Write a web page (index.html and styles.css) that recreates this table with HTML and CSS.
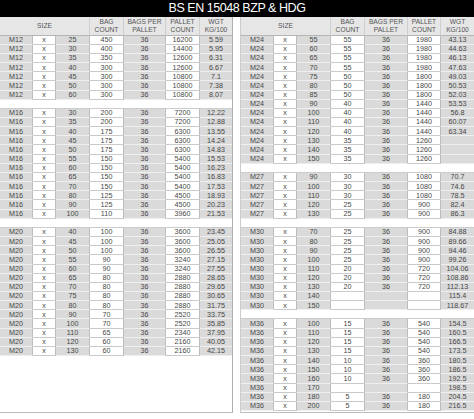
FILE: index.html
```html
<!DOCTYPE html>
<html lang="en">
<head>
<meta charset="utf-8">
<title>BS EN 15048 BZP &amp; HDG</title>
<link rel="stylesheet" href="styles.css">
</head>
<body>
<div class="title">BS EN 15048 BZP &amp; HDG</div>
<div class="main">
  <div class="panel left">
    <div class="head">
      <span class="size">SIZE</span><span>BAG<br>COUNT</span><span>BAGS PER<br>PALLET</span><span>PALLET<br>COUNT</span><span>WGT<br>KG/100</span>
    </div>
    <div class="row"><span>M12</span><span>x</span><span>25</span><span>450</span><span>36</span><span>16200</span><span>5.59</span></div>
    <div class="row"><span>M12</span><span>x</span><span>30</span><span>400</span><span>36</span><span>14400</span><span>5.95</span></div>
    <div class="row"><span>M12</span><span>x</span><span>35</span><span>350</span><span>36</span><span>12600</span><span>6.31</span></div>
    <div class="row"><span>M12</span><span>x</span><span>40</span><span>300</span><span>36</span><span>12600</span><span>6.67</span></div>
    <div class="row"><span>M12</span><span>x</span><span>45</span><span>300</span><span>36</span><span>10800</span><span>7.1</span></div>
    <div class="row"><span>M12</span><span>x</span><span>50</span><span>300</span><span>36</span><span>10800</span><span>7.38</span></div>
    <div class="row"><span>M12</span><span>x</span><span>60</span><span>300</span><span>36</span><span>10800</span><span>8.07</span></div>
    <div class="row blank"></div>
    <div class="row"><span>M16</span><span>x</span><span>30</span><span>200</span><span>36</span><span>7200</span><span>12.22</span></div>
    <div class="row"><span>M16</span><span>x</span><span>35</span><span>200</span><span>36</span><span>7200</span><span>12.88</span></div>
    <div class="row"><span>M16</span><span>x</span><span>40</span><span>175</span><span>36</span><span>6300</span><span>13.55</span></div>
    <div class="row"><span>M16</span><span>x</span><span>45</span><span>175</span><span>36</span><span>6300</span><span>14.24</span></div>
    <div class="row"><span>M16</span><span>x</span><span>50</span><span>175</span><span>36</span><span>6300</span><span>14.83</span></div>
    <div class="row"><span>M16</span><span>x</span><span>55</span><span>150</span><span>36</span><span>5400</span><span>15.53</span></div>
    <div class="row"><span>M16</span><span>x</span><span>60</span><span>150</span><span>36</span><span>5400</span><span>16.23</span></div>
    <div class="row"><span>M16</span><span>x</span><span>65</span><span>150</span><span>36</span><span>5400</span><span>16.83</span></div>
    <div class="row"><span>M16</span><span>x</span><span>70</span><span>150</span><span>36</span><span>5400</span><span>17.53</span></div>
    <div class="row"><span>M16</span><span>x</span><span>80</span><span>125</span><span>36</span><span>4500</span><span>18.93</span></div>
    <div class="row"><span>M16</span><span>x</span><span>90</span><span>125</span><span>36</span><span>4500</span><span>20.23</span></div>
    <div class="row"><span>M16</span><span>x</span><span>100</span><span>110</span><span>36</span><span>3960</span><span>21.53</span></div>
    <div class="row blank"></div>
    <div class="row"><span>M20</span><span>x</span><span>40</span><span>100</span><span>36</span><span>3600</span><span>23.45</span></div>
    <div class="row"><span>M20</span><span>x</span><span>45</span><span>100</span><span>36</span><span>3600</span><span>25.05</span></div>
    <div class="row"><span>M20</span><span>x</span><span>50</span><span>100</span><span>36</span><span>3600</span><span>26.55</span></div>
    <div class="row"><span>M20</span><span>x</span><span>55</span><span>90</span><span>36</span><span>3240</span><span>27.15</span></div>
    <div class="row"><span>M20</span><span>x</span><span>60</span><span>90</span><span>36</span><span>3240</span><span>27.55</span></div>
    <div class="row"><span>M20</span><span>x</span><span>65</span><span>80</span><span>36</span><span>2880</span><span>28.65</span></div>
    <div class="row"><span>M20</span><span>x</span><span>70</span><span>80</span><span>36</span><span>2880</span><span>29.65</span></div>
    <div class="row"><span>M20</span><span>x</span><span>75</span><span>80</span><span>36</span><span>2880</span><span>30.65</span></div>
    <div class="row"><span>M20</span><span>x</span><span>80</span><span>80</span><span>36</span><span>2880</span><span>31.75</span></div>
    <div class="row"><span>M20</span><span>x</span><span>90</span><span>70</span><span>36</span><span>2520</span><span>33.75</span></div>
    <div class="row"><span>M20</span><span>x</span><span>100</span><span>70</span><span>36</span><span>2520</span><span>35.85</span></div>
    <div class="row"><span>M20</span><span>x</span><span>110</span><span>65</span><span>36</span><span>2340</span><span>37.95</span></div>
    <div class="row"><span>M20</span><span>x</span><span>120</span><span>60</span><span>36</span><span>2160</span><span>40.05</span></div>
    <div class="row"><span>M20</span><span>x</span><span>130</span><span>60</span><span>36</span><span>2160</span><span>42.15</span></div>
  </div>
  <div class="panel right">
    <div class="head">
      <span class="size">SIZE</span><span>BAG<br>COUNT</span><span>BAGS PER<br>PALLET</span><span>PALLET<br>COUNT</span><span>WGT<br>KG/100</span>
    </div>
    <div class="row"><span>M24</span><span>x</span><span>55</span><span>55</span><span>36</span><span>1980</span><span>43.13</span></div>
    <div class="row"><span>M24</span><span>x</span><span>60</span><span>55</span><span>36</span><span>1980</span><span>44.63</span></div>
    <div class="row"><span>M24</span><span>x</span><span>65</span><span>55</span><span>36</span><span>1980</span><span>46.13</span></div>
    <div class="row"><span>M24</span><span>x</span><span>70</span><span>55</span><span>36</span><span>1980</span><span>47.63</span></div>
    <div class="row"><span>M24</span><span>x</span><span>75</span><span>50</span><span>36</span><span>1800</span><span>49.03</span></div>
    <div class="row"><span>M24</span><span>x</span><span>80</span><span>50</span><span>36</span><span>1800</span><span>50.53</span></div>
    <div class="row"><span>M24</span><span>x</span><span>85</span><span>50</span><span>36</span><span>1800</span><span>52.03</span></div>
    <div class="row"><span>M24</span><span>x</span><span>90</span><span>40</span><span>36</span><span>1440</span><span>53.53</span></div>
    <div class="row"><span>M24</span><span>x</span><span>100</span><span>40</span><span>36</span><span>1440</span><span>56.8</span></div>
    <div class="row"><span>M24</span><span>x</span><span>110</span><span>40</span><span>36</span><span>1440</span><span>60.07</span></div>
    <div class="row"><span>M24</span><span>x</span><span>120</span><span>40</span><span>36</span><span>1440</span><span>63.34</span></div>
    <div class="row"><span>M24</span><span>x</span><span>130</span><span>35</span><span>36</span><span>1260</span><span></span></div>
    <div class="row"><span>M24</span><span>x</span><span>140</span><span>35</span><span>36</span><span>1260</span><span></span></div>
    <div class="row"><span>M24</span><span>x</span><span>150</span><span>35</span><span>36</span><span>1260</span><span></span></div>
    <div class="row blank"></div>
    <div class="row"><span>M27</span><span>x</span><span>90</span><span>30</span><span>36</span><span>1080</span><span>70.7</span></div>
    <div class="row"><span>M27</span><span>x</span><span>100</span><span>30</span><span>36</span><span>1080</span><span>74.6</span></div>
    <div class="row"><span>M27</span><span>x</span><span>110</span><span>30</span><span>36</span><span>1080</span><span>78.5</span></div>
    <div class="row"><span>M27</span><span>x</span><span>120</span><span>25</span><span>36</span><span>900</span><span>82.4</span></div>
    <div class="row"><span>M27</span><span>x</span><span>130</span><span>25</span><span>36</span><span>900</span><span>86.3</span></div>
    <div class="row blank"></div>
    <div class="row"><span>M30</span><span>x</span><span>70</span><span>25</span><span>36</span><span>900</span><span>84.88</span></div>
    <div class="row"><span>M30</span><span>x</span><span>80</span><span>25</span><span>36</span><span>900</span><span>89.66</span></div>
    <div class="row"><span>M30</span><span>x</span><span>90</span><span>25</span><span>36</span><span>900</span><span>94.46</span></div>
    <div class="row"><span>M30</span><span>x</span><span>100</span><span>25</span><span>36</span><span>900</span><span>99.26</span></div>
    <div class="row"><span>M30</span><span>x</span><span>110</span><span>20</span><span>36</span><span>720</span><span>104.06</span></div>
    <div class="row"><span>M30</span><span>x</span><span>120</span><span>20</span><span>36</span><span>720</span><span>108.86</span></div>
    <div class="row"><span>M30</span><span>x</span><span>130</span><span>20</span><span>36</span><span>720</span><span>112.13</span></div>
    <div class="row"><span>M30</span><span>x</span><span>140</span><span></span><span></span><span></span><span>115.4</span></div>
    <div class="row"><span>M30</span><span>x</span><span>150</span><span></span><span></span><span></span><span>118.67</span></div>
    <div class="row blank"></div>
    <div class="row"><span>M36</span><span>x</span><span>100</span><span>15</span><span>36</span><span>540</span><span>154.5</span></div>
    <div class="row"><span>M36</span><span>x</span><span>110</span><span>15</span><span>36</span><span>540</span><span>160.5</span></div>
    <div class="row"><span>M36</span><span>x</span><span>120</span><span>15</span><span>36</span><span>540</span><span>166.5</span></div>
    <div class="row"><span>M36</span><span>x</span><span>130</span><span>15</span><span>36</span><span>540</span><span>173.5</span></div>
    <div class="row"><span>M36</span><span>x</span><span>140</span><span>10</span><span>36</span><span>360</span><span>180.5</span></div>
    <div class="row"><span>M36</span><span>x</span><span>150</span><span>10</span><span>36</span><span>360</span><span>186.5</span></div>
    <div class="row"><span>M36</span><span>x</span><span>160</span><span>10</span><span>36</span><span>360</span><span>192.5</span></div>
    <div class="row"><span>M36</span><span>x</span><span>170</span><span></span><span></span><span></span><span>198.5</span></div>
    <div class="row"><span>M36</span><span>x</span><span>180</span><span>5</span><span>36</span><span>180</span><span>204.5</span></div>
    <div class="row"><span>M36</span><span>x</span><span>200</span><span>5</span><span>36</span><span>180</span><span>216.5</span></div>
  </div>
</div>
</body>
</html>
```

FILE: styles.css
```css
* { box-sizing: border-box; }

html, body {
  margin: 0;
  padding: 0;
  background: #fff;
}

body {
  width: 474px;
  height: 419px;
  overflow: hidden;
  font-family: "Liberation Sans", Arial, sans-serif;
  color: #333;
}

.title {
  height: 17px;
  background: #000;
  color: #fff;
  font-size: 12.5px;
  letter-spacing: -0.45px;
  line-height: 17px;
  text-align: center;
}

.main {
  display: flex;
  gap: 7px;
}

.panel {
  height: 396px;
  border-bottom: 1px solid #bcbcbc;
}

.panel.left {
  width: 233px;
  border-right: 1px solid #b0b0b0;
}

.panel.right {
  width: 234px;
  border-left: 1px solid #cccccc;
}

.left .head,
.left .row {
  grid-template-columns: 33px 23px 34px 34px 42px 34px 32px;
}

.right .head,
.right .row {
  grid-template-columns: 33px 23px 34px 34px 43px 33px 33px;
}

.head {
  display: grid;
  height: 18.6px;
}

.head span {
  display: flex;
  align-items: center;
  justify-content: center;
  text-align: center;
  background: #e6e6e6;
  color: #555;
  font-size: 6.7px;
  line-height: 7.6px;
  border-right: 1px solid #cfcfcf;
  border-bottom: 1px solid #b4b4b4;
}

.head .size {
  grid-column: span 3;
}

.head span:last-child,
.row span:last-child {
  border-right: none;
}

.row {
  display: grid;
  height: 9.17px;
}

.row span {
  display: flex;
  align-items: center;
  justify-content: center;
  font-size: 7.2px;
  line-height: 1;
  color: #474747;
  border-right: 1px solid #bdbdbd;
  border-bottom: 1px solid #cacaca;
}

.row span:nth-child(odd) {
  background: #dadada;
  border-bottom-color: #efefef;
}

.row span:nth-child(even) {
  background: #fff;
}

.row.blank {
  display: block;
  background: #fff;
  border-bottom: 1px solid #cccccc;
}
```
